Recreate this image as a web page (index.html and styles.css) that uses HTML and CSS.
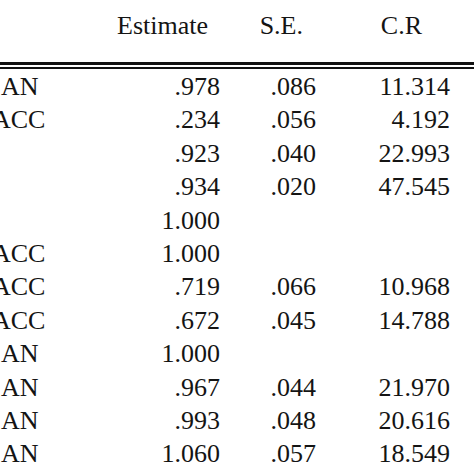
FILE: index.html
```html
<!DOCTYPE html>
<html lang="en">
<head>
  <meta charset="UTF-8" />
  <meta name="viewport" content="width=device-width, initial-scale=1.0" />
  <title>Estimates</title>
  <link rel="stylesheet" href="styles.css">
</head>
<body>
  <div class="sheet">
    <div class="row head">
      <div class="lab"></div>
      <div class="num h-est">Estimate</div>
      <div class="num h-se">S.E.</div>
      <div class="num h-cr">C.R</div>
    </div>
    <div class="rule"></div>

    <div class="row"><div class="lab"><span class="an">AN</span></div><div class="num">.978</div><div class="num">.086</div><div class="num">11.314</div></div>
    <div class="row"><div class="lab"><span class="acc">ACC</span></div><div class="num">.234</div><div class="num">.056</div><div class="num">4.192</div></div>
    <div class="row"><div class="lab"></div><div class="num">.923</div><div class="num">.040</div><div class="num">22.993</div></div>
    <div class="row"><div class="lab"></div><div class="num">.934</div><div class="num">.020</div><div class="num">47.545</div></div>
    <div class="row"><div class="lab"></div><div class="num">1.000</div><div class="num"></div><div class="num"></div></div>
    <div class="row"><div class="lab"><span class="acc">ACC</span></div><div class="num">1.000</div><div class="num"></div><div class="num"></div></div>
    <div class="row"><div class="lab"><span class="acc">ACC</span></div><div class="num">.719</div><div class="num">.066</div><div class="num">10.968</div></div>
    <div class="row"><div class="lab"><span class="acc">ACC</span></div><div class="num">.672</div><div class="num">.045</div><div class="num">14.788</div></div>
    <div class="row"><div class="lab"><span class="an">AN</span></div><div class="num">1.000</div><div class="num"></div><div class="num"></div></div>
    <div class="row"><div class="lab"><span class="an">AN</span></div><div class="num">.967</div><div class="num">.044</div><div class="num">21.970</div></div>
    <div class="row"><div class="lab"><span class="an">AN</span></div><div class="num">.993</div><div class="num">.048</div><div class="num">20.616</div></div>
    <div class="row"><div class="lab"><span class="an">AN</span></div><div class="num">1.060</div><div class="num">.057</div><div class="num">18.549</div></div>
  </div>
</body>
</html>
```

FILE: styles.css
```css
html, body {
  margin: 0;
  padding: 0;
  background: #ffffff;
  overflow: hidden;
}

.sheet {
  width: 474px;
  height: 474px;
  font-family: "Liberation Serif", "Times New Roman", serif;
  font-size: 26px;
  color: #141414;
}

.row {
  display: grid;
  grid-template-columns: 100px 120px 96px 134px 24px;
  height: 33.4px;
  line-height: 33.4px;
}

.head {
  height: 62px;
  line-height: 52px;
}

.rule {
  height: 2px;
  border-top: 3px solid #111;
  border-bottom: 2px solid #111;
  margin-bottom: 1px;
}

.lab {
  overflow: hidden;
  white-space: nowrap;
}

.an {
  margin-left: 1px;
}

.acc {
  margin-left: -8px;
}

.num {
  text-align: right;
  white-space: nowrap;
}

.h-est { padding-right: 12px; }
.h-se { padding-right: 13px; }
.h-cr { padding-right: 28px; }
```
